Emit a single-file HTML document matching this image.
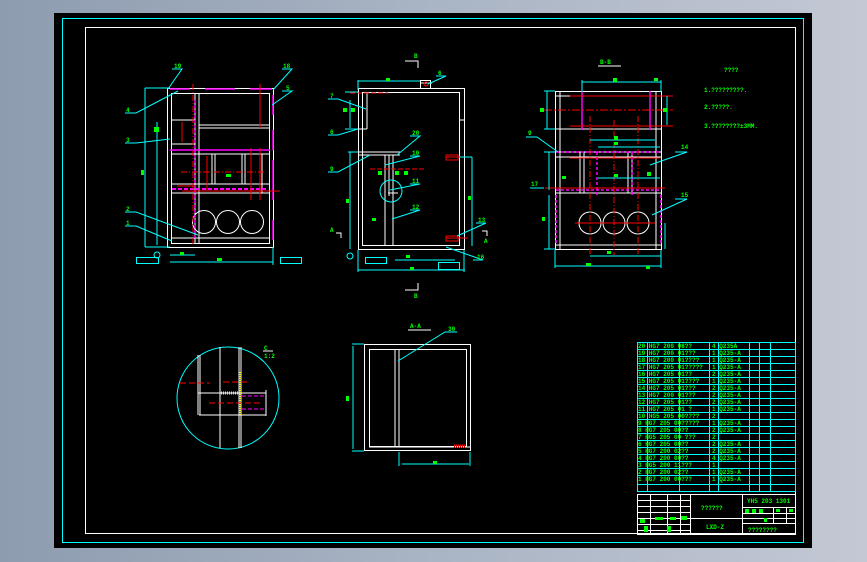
<!DOCTYPE html>
<html><head><meta charset="utf-8"><style>
html,body{margin:0;padding:0;width:867px;height:562px;overflow:hidden;background:linear-gradient(90deg,#8e9cb0,#a9b4c4 50%,#c3c8d4);}
svg{position:absolute;left:0;top:0}
text{font-family:"Liberation Mono",monospace;fill:#00ff00;font-size:6px;font-weight:bold}
</style></head><body>
<svg width="867" height="562" viewBox="0 0 867 562">
<rect x="54" y="13" width="758" height="535" fill="#000"/>
<rect x="62.5" y="18.5" width="741" height="524" fill="none" stroke="#00ffff" stroke-width="1"/>
<rect x="85.5" y="27.5" width="710" height="506" fill="none" stroke="#fff" stroke-width="1"/>

<!-- LEFT VIEW -->
<g fill="none" stroke="#fff" stroke-width="1">
<rect x="167.5" y="88.5" width="106" height="159"/>
<rect x="171.5" y="93.5" width="98" height="150"/>
<line x1="195" y1="94" x2="195" y2="243"/><line x1="199" y1="94" x2="199" y2="243"/>
<line x1="199" y1="125" x2="269" y2="125"/><line x1="199" y1="128" x2="269" y2="128"/>
<line x1="171" y1="150" x2="269" y2="150"/><line x1="171" y1="154" x2="269" y2="154"/>
<line x1="171" y1="184" x2="269" y2="184"/><line x1="171" y1="193" x2="269" y2="193"/>
<line x1="171" y1="120" x2="195" y2="120"/><line x1="171" y1="144" x2="195" y2="144"/>
<line x1="171" y1="238" x2="269" y2="238"/>
<line x1="260" y1="94" x2="260" y2="128"/><line x1="262" y1="154" x2="262" y2="193"/>
<line x1="212" y1="154" x2="212" y2="184"/><line x1="215" y1="154" x2="215" y2="184"/>
<line x1="242" y1="154" x2="242" y2="184"/><line x1="245" y1="154" x2="245" y2="184"/>
<circle cx="204" cy="222" r="11.5"/><circle cx="228" cy="222" r="11.5"/><circle cx="252" cy="222" r="11.5"/>
</g>
<g stroke="#ff00ff" stroke-width="1.5" fill="none">
<line x1="170" y1="89" x2="190" y2="89"/><line x1="205" y1="89" x2="235" y2="89"/><line x1="250" y1="89" x2="272" y2="89"/>
<line x1="273" y1="95" x2="273" y2="115"/><line x1="273" y1="130" x2="273" y2="150"/><line x1="273" y1="160" x2="273" y2="200"/><line x1="273" y1="220" x2="273" y2="240"/>
<line x1="195" y1="100" x2="195" y2="240" stroke-dasharray="3 2"/>
<line x1="172" y1="189" x2="268" y2="189" stroke-width="2" stroke-dasharray="4 2"/>
<line x1="170" y1="150" x2="270" y2="150"/>
</g>
<g stroke="#ff0000" stroke-width="1" fill="none">
<line x1="193" y1="84" x2="193" y2="245" stroke-dasharray="6 2 1 2"/>
<line x1="260" y1="84" x2="260" y2="128"/>
<line x1="181" y1="172" x2="266" y2="172" stroke-dasharray="6 2 1 2"/>
<line x1="182" y1="191" x2="280" y2="191"/>
<line x1="251" y1="148" x2="251" y2="200"/><line x1="260" y1="148" x2="260" y2="200"/>
<line x1="207" y1="156" x2="207" y2="190"/><line x1="177" y1="186" x2="195" y2="186"/>
<line x1="182" y1="122" x2="182" y2="142"/>
</g>
<g stroke="#00ffff" stroke-width="1" fill="none">
<line x1="145" y1="88" x2="170" y2="88"/><line x1="145" y1="247" x2="170" y2="247"/>
<line x1="145" y1="88" x2="145" y2="247"/><line x1="157" y1="122" x2="157" y2="245"/>
<line x1="170" y1="262" x2="273" y2="262"/><line x1="170" y1="255" x2="195" y2="255"/>
<line x1="273" y1="247" x2="273" y2="265"/>
<polyline points="125,113 136,113 178,91"/><polyline points="125,143 136,143 170,139"/>
<polyline points="125,212 136,212 198,235"/><polyline points="125,226 136,226 172,241"/>
<polyline points="172,69 182,69 168,89"/><polyline points="282,69 292,69 273,90"/><polyline points="282,91 292,91 272,105"/>
<rect x="136.5" y="257.5" width="22" height="6"/><rect x="280.5" y="257.5" width="21" height="6"/>
<circle cx="157" cy="255" r="3"/>
</g>
<g fill="#00ff00">
<text x="126" y="112">4</text><text x="126" y="142">3</text><text x="126" y="211">2</text><text x="126" y="225">1</text>
<text x="174" y="68">19</text><text x="283" y="68">18</text><text x="286" y="90">5</text>
<rect x="217" y="258" width="5" height="3"/><rect x="154" y="127" width="5" height="5"/><rect x="141" y="170" width="3" height="5"/>
<rect x="226" y="174" width="5" height="3"/><rect x="180" y="252" width="4" height="3"/>
</g>

<!-- MIDDLE VIEW -->
<g fill="none" stroke="#fff" stroke-width="1">
<rect x="358.5" y="88.5" width="106" height="161"/>
<rect x="362.5" y="92.5" width="97" height="153"/>
<line x1="367" y1="92" x2="367" y2="129"/><line x1="358" y1="129" x2="367" y2="129"/>
<line x1="358" y1="152" x2="400" y2="152"/><line x1="358" y1="155" x2="400" y2="155"/>
<line x1="385" y1="155" x2="385" y2="245"/><line x1="393" y1="155" x2="393" y2="245"/>
<line x1="389" y1="155" x2="389" y2="196"/>
<line x1="388" y1="193" x2="398" y2="193"/>
<line x1="420" y1="83" x2="432" y2="83"/><rect x="420.5" y="80.5" width="10" height="8"/>
<line x1="459" y1="120" x2="464" y2="120"/>
</g>
<g stroke="#ff0000" fill="none"><line x1="350" y1="93" x2="388" y2="93" stroke-dasharray="5 2"/><line x1="370" y1="169" x2="425" y2="169" stroke-dasharray="5 2"/><circle cx="426" cy="84" r="2"/><line x1="446" y1="157" x2="470" y2="157"/><line x1="446" y1="238" x2="468" y2="238"/>
<rect x="446" y="155" width="12" height="5" stroke-width="1"/><rect x="446" y="236" width="12" height="5"/></g>
<g stroke="#00ffff" stroke-width="1" fill="none">
<line x1="358" y1="81" x2="420" y2="81"/><line x1="358" y1="80" x2="358" y2="90"/>
<line x1="345" y1="92" x2="358" y2="92"/><line x1="350" y1="100" x2="350" y2="128"/>
<line x1="345" y1="129" x2="358" y2="129"/>
<line x1="350" y1="152" x2="350" y2="249"/><line x1="348" y1="152" x2="358" y2="152"/>
<line x1="358" y1="270" x2="465" y2="270"/><line x1="358" y1="250" x2="358" y2="272"/><line x1="464" y1="250" x2="464" y2="272"/>
<line x1="395" y1="260" x2="455" y2="260"/><line x1="460" y1="157" x2="472" y2="157"/><line x1="472" y1="157" x2="472" y2="246"/>
<circle cx="391" cy="191" r="11"/>
<polyline points="328,99 338,99 366,109"/><polyline points="328,135 338,135 358,129"/>
<polyline points="328,172 338,172 370,155"/><polyline points="410,136 420,136 397,155"/>
<polyline points="410,156 420,156 385,165"/><polyline points="410,184 420,184 390,190"/>
<polyline points="410,210 420,210 392,219"/><polyline points="436,76 446,76 428,84"/>
<polyline points="476,223 486,223 457,236"/><polyline points="473,260 483,260 446,247"/>
<rect x="365.5" y="257.5" width="21" height="6"/><rect x="438.5" y="262.5" width="21" height="7"/>
<circle cx="350" cy="256" r="3"/>
</g>
<g stroke="#fff" fill="none"><polyline points="405,61 418,61 418,68"/><polyline points="405,290 418,290 418,283"/><polyline points="336,233 341,233 341,238"/><polyline points="482,231 487,231 487,236"/></g>
<g fill="#00ff00">
<text x="414" y="58" font-size="9">B</text><text x="414" y="298" font-size="9">B</text>
<text x="330" y="232" font-size="9">A</text><text x="484" y="243" font-size="8">A</text>
<text x="330" y="98">7</text><text x="330" y="134">6</text><text x="330" y="171">9</text>
<text x="412" y="135">20</text><text x="412" y="155">10</text><text x="412" y="183">11</text><text x="412" y="209">12</text>
<text x="438" y="75">6</text><text x="478" y="222">13</text><text x="477" y="259">16</text>
<rect x="386" y="78" width="4" height="3"/><rect x="343" y="108" width="4" height="4"/><rect x="351" y="108" width="4" height="4"/>
<rect x="346" y="199" width="3" height="4"/><rect x="372" y="218" width="4" height="3"/><rect x="406" y="255" width="4" height="3"/><rect x="410" y="267" width="4" height="3"/>
<rect x="468" y="196" width="3" height="4"/><rect x="378" y="171" width="4" height="4"/><rect x="395" y="171" width="4" height="4"/><rect x="404" y="171" width="4" height="4"/>
</g>

<!-- RIGHT VIEW B-B -->
<text x="600" y="64" font-size="9">B-B</text><line x1="598" y1="66" x2="621" y2="66" stroke="#fff"/>
<g fill="none" stroke="#fff" stroke-width="1">
<rect x="555.5" y="91.5" width="106" height="158"/>
<line x1="560" y1="91" x2="560" y2="249"/><line x1="656" y1="91" x2="656" y2="249"/>
<line x1="555" y1="96" x2="661" y2="96"/>
<line x1="555" y1="129" x2="661" y2="129"/><line x1="555" y1="152" x2="661" y2="152"/><line x1="555" y1="157" x2="661" y2="157"/>
<line x1="555" y1="188" x2="661" y2="188"/><line x1="555" y1="193" x2="661" y2="193"/><line x1="555" y1="245" x2="661" y2="245"/>
<line x1="580" y1="152" x2="580" y2="193"/><line x1="584" y1="152" x2="584" y2="193"/>
<line x1="628" y1="152" x2="628" y2="193"/><line x1="632" y1="152" x2="632" y2="193"/>
<circle cx="590" cy="223" r="11"/><circle cx="614" cy="223" r="11"/><circle cx="638" cy="223" r="11"/>
</g>
<g stroke="#ff00ff" stroke-width="1.5" fill="none">
<line x1="582" y1="91" x2="582" y2="130"/><line x1="650" y1="91" x2="650" y2="130"/>
<line x1="556" y1="152" x2="660" y2="152" stroke-dasharray="3 2"/><line x1="556" y1="190" x2="660" y2="190" stroke-dasharray="3 2"/>
<line x1="556" y1="195" x2="556" y2="245" stroke-dasharray="3 2"/><line x1="661" y1="195" x2="661" y2="245" stroke-dasharray="3 2"/>
<line x1="597" y1="152" x2="597" y2="195" stroke-dasharray="3 2"/><line x1="632" y1="152" x2="632" y2="195" stroke-dasharray="3 2"/>
</g>
<g stroke="#ff0000" fill="none" stroke-width="1">
<line x1="544" y1="110" x2="673" y2="110" stroke-dasharray="8 2 2 2"/><line x1="570" y1="96" x2="673" y2="96"/><line x1="570" y1="126" x2="673" y2="126"/>
<line x1="590" y1="116" x2="590" y2="255" stroke-dasharray="6 2 1 2"/><line x1="614" y1="120" x2="614" y2="255" stroke-dasharray="6 2 1 2"/><line x1="638" y1="116" x2="638" y2="255" stroke-dasharray="6 2 1 2"/>
<line x1="570" y1="158" x2="660" y2="158"/><line x1="545" y1="188" x2="665" y2="188"/><line x1="575" y1="223" x2="655" y2="223"/>
</g>
<g stroke="#00ffff" fill="none">
<line x1="582" y1="82" x2="661" y2="82"/><line x1="582" y1="80" x2="582" y2="92"/><line x1="661" y1="80" x2="661" y2="92"/>
<line x1="544" y1="91" x2="555" y2="91"/><line x1="544" y1="129" x2="555" y2="129"/><line x1="547" y1="91" x2="547" y2="129"/>
<line x1="667" y1="96" x2="667" y2="125"/><line x1="544" y1="152" x2="555" y2="152"/><line x1="549" y1="152" x2="549" y2="190"/>
<line x1="549" y1="195" x2="549" y2="249"/><line x1="544" y1="249" x2="555" y2="249"/>
<line x1="555" y1="266" x2="661" y2="266"/><line x1="555" y1="250" x2="555" y2="268"/><line x1="661" y1="250" x2="661" y2="268"/>
<line x1="590" y1="256" x2="661" y2="256"/><line x1="665" y1="223" x2="665" y2="249"/><line x1="590" y1="140" x2="655" y2="140"/>
<line x1="598" y1="147" x2="660" y2="147"/><line x1="598" y1="178" x2="660" y2="178"/>
<polyline points="526,137 537,137 558,152"/><polyline points="530,188 544,188"/><polyline points="675,152 687,152 650,165"/>
<polyline points="675,199 687,199 652,215"/>
</g>
<g fill="#00ff00">
<text x="528" y="135">9</text><text x="531" y="186">17</text><text x="681" y="149">14</text><text x="681" y="197">15</text>
<rect x="613" y="78" width="4" height="4"/><rect x="654" y="78" width="4" height="3"/><rect x="540" y="108" width="4" height="4"/>
<rect x="663" y="108" width="4" height="4"/><rect x="614" y="136" width="4" height="4"/><rect x="614" y="142" width="4" height="3"/>
<rect x="614" y="174" width="4" height="3"/><rect x="647" y="172" width="4" height="4"/><rect x="562" y="176" width="4" height="3"/>
<rect x="542" y="217" width="3" height="4"/><rect x="646" y="266" width="4" height="3"/><rect x="607" y="251" width="4" height="3"/>
<rect x="586" y="263" width="5" height="3"/>
</g>

<!-- NOTES -->
<text x="724" y="72" font-size="9">????</text>
<text x="704" y="92" font-size="7">1.?????????.</text>
<text x="704" y="109" font-size="7">2.?????.</text>
<text x="704" y="128" font-size="7">3.????????±3MM.</text>

<!-- DETAIL CIRCLE -->
<g fill="none">
<circle cx="228" cy="398" r="51" stroke="#00ffff"/>
<g stroke="#fff"><line x1="220" y1="347" x2="220" y2="448"/><line x1="239" y1="347" x2="239" y2="448"/><line x1="241" y1="347" x2="241" y2="448"/>
<line x1="198" y1="393" x2="266" y2="393"/><line x1="199" y1="415" x2="266" y2="415"/><line x1="266" y1="390" x2="266" y2="416"/>
<line x1="198" y1="355" x2="198" y2="415"/><line x1="200" y1="355" x2="200" y2="415"/></g>
<line x1="240" y1="372" x2="240" y2="415" stroke="#ffff00" stroke-width="2" stroke-dasharray="1 1"/>
<line x1="221" y1="393" x2="240" y2="393" stroke="#ffff00" stroke-width="3" stroke-dasharray="1 1"/>
<g stroke="#ff0000"><line x1="180" y1="383" x2="210" y2="383" stroke-dasharray="6 3"/><line x1="223" y1="382" x2="248" y2="382" stroke-dasharray="6 3"/><line x1="209" y1="403" x2="262" y2="403" stroke-dasharray="6 3"/></g>
<g stroke="#ff00ff"><line x1="242" y1="396" x2="266" y2="396" stroke-dasharray="4 2"/><line x1="242" y1="409" x2="266" y2="409" stroke-dasharray="4 2"/></g>
</g>
<text x="264" y="350">C</text><line x1="263" y1="351" x2="273" y2="351" stroke="#fff"/><text x="264" y="358">1:2</text>

<!-- A-A VIEW -->
<text x="410" y="328" font-size="8">A-A</text><line x1="408" y1="330" x2="431" y2="330" stroke="#fff"/>
<g fill="none" stroke="#fff">
<rect x="364.5" y="344.5" width="106" height="106"/><rect x="369.5" y="349.5" width="97" height="97"/>
<line x1="395" y1="349" x2="395" y2="446"/><line x1="399" y1="349" x2="399" y2="446"/>
<line x1="369" y1="447" x2="470" y2="447"/>
</g>
<g stroke="#00ffff" fill="none"><line x1="352" y1="344" x2="364" y2="344"/><line x1="352" y1="451" x2="364" y2="451"/><line x1="353" y1="346" x2="353" y2="449"/>
<line x1="399" y1="452" x2="399" y2="466"/><line x1="470" y1="452" x2="470" y2="466"/><line x1="402" y1="464" x2="469" y2="464"/>
<polyline points="398,361 445,332 457,332"/></g>
<text x="448" y="331">30</text><rect x="346" y="396" width="3" height="5" fill="#00ff00"/><rect x="433" y="461" width="4" height="3" fill="#00ff00"/>
<line x1="454" y1="446" x2="465" y2="446" stroke="#ff0000" stroke-dasharray="1 1" stroke-width="3"/>

<!-- PARTS TABLE -->
<g stroke="#00ffff" fill="none" stroke-width="1">
<rect x="637.5" y="342.5" width="158" height="149"/>
<path d="M637 349.5H796M637 356.5H796M637 363.5H796M637 370.5H796M637 377.5H796M637 384.5H796M637 391.5H796M637 398.5H796M637 405.5H796M637 412.5H796M637 419.5H796M637 426.5H796M637 433.5H796M637 440.5H796M637 447.5H796M637 454.5H796M637 461.5H796M637 468.5H796M637 475.5H796M637 484.5H796"/>
<path d="M647.5 342V492M679.5 342V492M709.5 342V492M718.5 342V492M749.5 342V492M759.5 342V492M770.5 342V492"/>
</g>
<g font-size="5">
<text x="638" y="348">20 HG7 200 08??</text><text x="638" y="355">19 HG7 200 01???</text><text x="638" y="362">18 HG7 200 01????</text>
<text x="638" y="369">17 HG7 205 01?????</text><text x="638" y="376">16 HG7 205 01??</text><text x="638" y="383">15 HG7 205 01????</text>
<text x="638" y="390">14 HG7 205 01???</text><text x="638" y="397">13 HG7 200 01???</text><text x="638" y="404">12 HG7 205 01??</text>
<text x="638" y="411">11 HG7 205 01 ?</text><text x="638" y="418">10 HG5 205 00????</text><text x="638" y="425">9 HG7 205 00?????</text>
<text x="638" y="432">8 HG7 205 00??</text><text x="638" y="439">7 HG5 205 00 ???</text><text x="638" y="446">6 HG7 205 00??</text>
<text x="638" y="453">5 HG7 200 02??</text><text x="638" y="460">4 HG7 200 00??</text><text x="638" y="467">3 HG5 200 11???</text>
<text x="638" y="474">2 HG7 200 02??</text><text x="638" y="481">1 HG7 200 00???</text>
<text x="712" y="348">4 Q235A</text><text x="712" y="355">1 Q235-A</text><text x="712" y="362">1 Q235-A</text><text x="712" y="369">1 Q235-A</text>
<text x="712" y="376">2 Q235-A</text><text x="712" y="383">1 Q235-A</text><text x="712" y="390">2 Q235-A</text><text x="712" y="397">2 Q235-A</text>
<text x="712" y="404">2 Q235-A</text><text x="712" y="411">1 Q235-A</text><text x="712" y="418">2</text><text x="712" y="425">1 Q235-A</text>
<text x="712" y="432">2 Q235-A</text><text x="712" y="439">2</text><text x="712" y="446">2 Q235-A</text><text x="712" y="453">2 Q235-A</text>
<text x="712" y="460">4 Q235-A</text><text x="712" y="467">1</text><text x="712" y="474">1 Q235-A</text><text x="712" y="481">1 Q235-A</text>
</g>
<!-- TITLE BLOCK -->
<g stroke="#fff" fill="none">
<rect x="637.5" y="494.5" width="158" height="40"/>
<line x1="690.5" y1="494" x2="690.5" y2="534"/><line x1="742.5" y1="494" x2="742.5" y2="534"/>
<line x1="690" y1="518.5" x2="742" y2="518.5"/><line x1="742" y1="507.5" x2="796" y2="507.5"/><line x1="742" y1="523.5" x2="796" y2="523.5"/>
<path d="M637 500.5H690M637 506.5H690M637 512.5H690M637 518.5H690M637 524.5H690M637 530.5H690M650.5 494V534M667.5 494V534M680.5 494V534"/>
<path d="M742 513.5H796M742 518.5H796M773.5 507V523M786.5 507V523"/>
</g>
<text x="701" y="510" font-size="7">??????</text><text x="706" y="529" font-size="7">LXD-Z</text>
<text x="747" y="503" font-size="7">YH5 203 1301</text><text x="748" y="532" font-size="6">????????</text>
<g fill="#00ff00"><rect x="640" y="519" width="5" height="4"/><rect x="655" y="517" width="8" height="3"/><rect x="670" y="517" width="6" height="3"/><rect x="681" y="516" width="6" height="4"/>
<rect x="745" y="509" width="4" height="4"/><rect x="752" y="509" width="4" height="4"/><rect x="759" y="509" width="4" height="4"/><rect x="776" y="509" width="4" height="3"/><rect x="789" y="509" width="4" height="3"/>
<rect x="644" y="526" width="4" height="6"/><rect x="667" y="526" width="4" height="6"/><rect x="764" y="518" width="3" height="4"/></g>
</svg>
</body></html>
